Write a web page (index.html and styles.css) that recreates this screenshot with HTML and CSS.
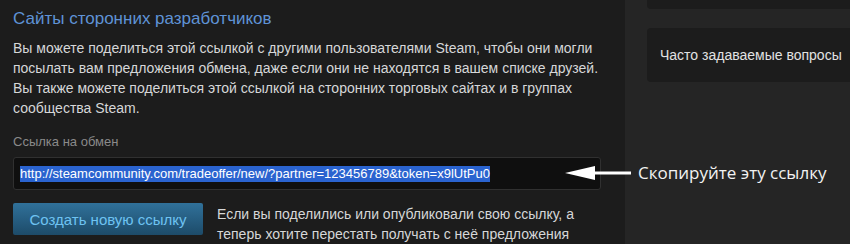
FILE: index.html
```html
<!DOCTYPE html>
<html>
<head>
    <meta charset="utf-8">
    <title>Ссылка на обмен</title>
    <link rel="stylesheet" href="styles.css">
</head>
<body>
    <div class="page">
        <div class="main">
            <h2>Сайты сторонних разработчиков</h2>
            <p class="intro">Вы можете поделиться этой ссылкой с другими пользователями Steam, чтобы они могли посылать вам предложения обмена, даже если они не находятся в вашем списке друзей. Вы также можете поделиться этой ссылкой на сторонних торговых сайтах и в группах сообщества Steam.</p>

            <div class="field-label">Ссылка на обмен</div>
            <div class="trade-url"><span class="selected">http://steamcommunity.com/tradeoffer/new/?partner=123456789&amp;token=x9lUtPu0</span></div>

            <div class="new-link">
                <button type="button" class="btn-blue">Создать новую ссылку</button>
                <p>Если вы поделились или опубликовали свою ссылку, а теперь хотите перестать получать с неё предложения</p>
            </div>
        </div>

        <div class="sidebar">
            <div class="side-box top"></div>
            <div class="side-box">Часто задаваемые вопросы</div>
        </div>

        <!-- annotation pointing at the link -->
        <div class="hint">
            <svg width="66" height="16" viewBox="0 0 66 16">
                <polygon points="0,8 30,1 30,15" fill="#fff"/>
                <rect x="29" y="6.5" width="37" height="3" fill="#fff"/>
            </svg>
            <span>Скопируйте эту ссылку</span>
        </div>
    </div>
</body>
</html>
```

FILE: styles.css
```css
body {
    margin: 0;
    background: #252525;
    font-family: Arial, "Liberation Sans", sans-serif;
    overflow: hidden;
}
.page {
    position: relative;
    display: flex;
    width: 850px;
    height: 244px;
}
.main {
    width: 625px;
    box-sizing: border-box;
    padding: 9px 24px 0 13px;
    background: #1c1c1c;
}
h2 {
    margin: 0;
    font-size: 17px;
    font-weight: normal;
    line-height: 20px;
    color: #5f93d6;
}
.intro {
    margin: 9px 0 0;
    font-size: 14px;
    line-height: 20px;
    color: #d6d7d8;
}
.field-label {
    margin-top: 16px;
    font-size: 13px;
    line-height: 16px;
    color: #8a8a8a;
}
.trade-url {
    margin-top: 7px;
    height: 31px;
    padding: 0 6px;
    display: flex;
    align-items: center;
    background: #0f0f0f;
    border: 1px solid #303030;
    border-radius: 3px;
    font-size: 13px;
    color: #fff;
}
.selected {
    background: #2a63cf;
    line-height: 16px;
}
.new-link {
    display: flex;
    gap: 14px;
    margin-top: 13px;
}
.btn-blue {
    flex: none;
    width: 190px;
    height: 32px;
    border: none;
    border-radius: 2px;
    background: linear-gradient(to bottom, #30719a, #1d4b69);
    color: #6ec3f2;
    font-family: Arial, "Liberation Sans", sans-serif;
    font-size: 15px;
    cursor: pointer;
}
.new-link p {
    margin: 1px 0 0;
    font-size: 14px;
    line-height: 20px;
    color: #d6d7d8;
}
.sidebar {
    flex: 1;
    padding-left: 22px;
    display: flex;
    flex-direction: column;
    gap: 19px;
}
.side-box {
    background: #1c1c1c;
    border-radius: 4px 0 0 4px;
    height: 54px;
    padding-left: 13px;
    display: flex;
    align-items: center;
    font-size: 14px;
    color: #e2e2e2;
}
.side-box.top {
    margin-top: -20px;
    height: 29px;
}
.hint {
    position: absolute;
    left: 565px;
    top: 161px;
    display: flex;
    align-items: center;
    gap: 7px;
}
.hint span {
    font-family: "Open Sans", "Noto Sans", sans-serif;
    font-size: 17px;
    color: #f2f2f2;
}
```
